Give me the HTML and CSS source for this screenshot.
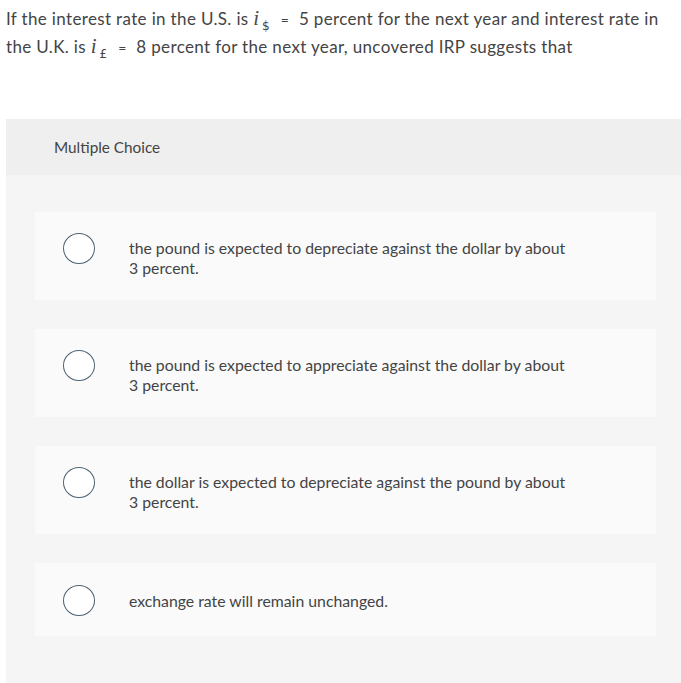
FILE: index.html
```html
<!DOCTYPE html>
<html lang="en">
<head>
    <meta charset="UTF-8">
    <title>Multiple Choice Question</title>
    <link rel="stylesheet" href="styles.css">
</head>
<body>
    <div class="question">
        <p>If the interest rate in the U.S. is <span class="math"><i>i</i><sub>$</sub></span><span class="eq">=</span>5 percent for the next year and interest rate in the U.K. is <span class="math"><i>i</i><sub>£</sub></span><span class="eq">=</span>8 percent for the next year, uncovered IRP suggests that</p>
    </div>

    <div class="choice-panel">
        <div class="choice-header">Multiple Choice</div>

        <div class="choice-list">
            <label class="choice">
                <span class="radio"></span>
                <span class="choice-text">the pound is expected to depreciate against the dollar by about 3 percent.</span>
            </label>
            <label class="choice">
                <span class="radio"></span>
                <span class="choice-text">the pound is expected to appreciate against the dollar by about 3 percent.</span>
            </label>
            <label class="choice">
                <span class="radio"></span>
                <span class="choice-text">the dollar is expected to depreciate against the pound by about 3 percent.</span>
            </label>
            <label class="choice single">
                <span class="radio"></span>
                <span class="choice-text">exchange rate will remain unchanged.</span>
            </label>
        </div>
    </div>
</body>
</html>
```

FILE: styles.css
```css
/* Basic reset */
* {
    box-sizing: border-box;
    margin: 0;
    padding: 0;
}
body {
    background-color: #fff;
    font-family: Lato, "Open Sans", sans-serif;
    color: #444;
}
/* Question text */
.question {
    padding: 5px 14px 0 6px;
    font-size: 17px;
    letter-spacing: 0.35px;
    line-height: 27px;
    height: 119px;
}
.math {
    display: inline-block;
    line-height: 20px;
    letter-spacing: 0;
}
.math i {
    font-family: "Liberation Serif", serif;
    font-size: 21px;
    color: #4a4a4a;
}
.math sub {
    font-family: "DejaVu Sans", sans-serif;
    font-size: 12px;
    line-height: 12px;
    vertical-align: -5px;
    margin-left: 3px;
}
.eq {
    margin: 0 10px 0 11px;
    font-size: 14px;
    letter-spacing: 0;
}
/* Grey panel holding the answers */
.choice-panel {
    margin-left: 6px;
    background-color: #f5f5f5;
    min-height: 564px;
}
.choice-header {
    background-color: #efefef;
    height: 56px;
    padding-left: 48px;
    display: flex;
    align-items: center;
    font-size: 15.3px;
}
.choice-list {
    display: flex;
    flex-direction: column;
    gap: 29px;
    padding: 37px 25px 40px 29px;
}
.choice {
    display: flex;
    align-items: flex-start;
    background-color: #fafafa;
    padding: 21px 20px 22px 28px;
}
.radio {
    flex: none;
    width: 32px;
    height: 31px;
    border: 1px solid #4d6272;
    border-radius: 50%;
    background-color: #fff;
    margin-right: 34px;
}
.choice-text {
    font-size: 15.8px;
    line-height: 20px;
    max-width: 446px;
    margin-top: 5px;
}
.choice.single {
    align-items: center;
    padding: 22px 20px 20px 28px;
}
.choice.single .choice-text {
    margin-top: 0;
}
```
